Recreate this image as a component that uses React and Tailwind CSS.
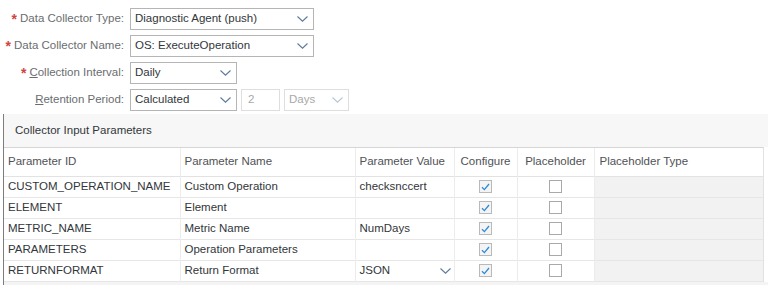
import React from 'react';

const Chevron = ({ className = 'text-[#5b7a9c]' }) => (
  <svg width="11" height="6" viewBox="0 0 11 6" className={className}>
    <polyline points="0.5,0.5 5.5,5.2 10.5,0.5" fill="none" stroke="currentColor" strokeWidth="1.1" />
  </svg>
);

const Select = ({ value, width, disabled }) => (
  <div
    className={`h-[22px] ${width} flex items-center justify-between pl-[4px] pr-[5px] bg-white border ${
      disabled ? 'border-[#dedede] text-[#a8a8a8]' : 'border-[#b5b5b5] text-[#32363a]'
    }`}
  >
    <span>{value}</span>
    <Chevron className={disabled ? 'text-[#b8c6d6]' : 'text-[#5b7a9c]'} />
  </div>
);

const FormRow = ({ required, label, children }) => (
  <div className="flex items-center h-[22px]">
    <div className="w-[124px] flex justify-end items-center text-[#6a6d70]">
      {required && <span className="text-[#d04343] text-[14px] font-bold mr-[3px] leading-none">*</span>}
      <span>{label}</span>
    </div>
    <div className="ml-[6px] flex items-center gap-[4px]">{children}</div>
  </div>
);

const CheckBox = ({ checked }) => (
  <div
    className={`w-[13px] h-[13px] mx-auto flex items-center justify-center border ${
      checked ? 'bg-[#f4f4f4] border-[#b9b9b9]' : 'bg-white border-[#a9a9a9]'
    }`}
  >
    {checked && (
      <svg width="9" height="8" viewBox="0 0 9 8">
        <polyline points="1,4.2 3.4,6.6 8,1" fill="none" stroke="#2a8ad8" strokeWidth="1.3" />
      </svg>
    )}
  </div>
);

const rows = [
  { id: 'CUSTOM_OPERATION_NAME', name: 'Custom Operation', value: 'checksnccert' },
  { id: 'ELEMENT', name: 'Element', value: '' },
  { id: 'METRIC_NAME', name: 'Metric Name', value: 'NumDays' },
  { id: 'PARAMETERS', name: 'Operation Parameters', value: '' },
  { id: 'RETURNFORMAT', name: 'Return Format', value: 'JSON', dropdown: true },
];

export default function App() {
  return (
    <div className="w-[768px] h-[285px] bg-white overflow-hidden text-[11.5px] font-['Liberation_Sans',Arial,sans-serif] text-[#32363a]">
      <div className="pt-[8px] flex flex-col gap-[5px]">
        <FormRow required label="Data Collector Type:">
          <Select value="Diagnostic Agent (push)" width="w-[184px]" />
        </FormRow>
        <FormRow required label="Data Collector Name:">
          <Select value="OS: ExecuteOperation" width="w-[184px]" />
        </FormRow>
        <FormRow
          required
          label={
            <>
              <span className="underline">C</span>ollection Interval:
            </>
          }
        >
          <Select value="Daily" width="w-[107px]" />
        </FormRow>
        <FormRow
          label={
            <>
              <span className="underline">R</span>etention Period:
            </>
          }
        >
          <Select value="Calculated" width="w-[107px]" />
          <div className="h-[22px] w-[39px] border border-[#dedede] text-[#a8a8a8] flex items-center pl-[6px]">2</div>
          <Select value="Days" width="w-[65px]" disabled />
        </FormRow>
      </div>

      <div className="mt-[3px] ml-[3px] border-l border-[#7d7d7d]">
        <div className="h-[33px] bg-[#f7f7f7] flex items-center pl-[11px] text-[#32363a]">
          Collector Input Parameters
        </div>
        <div className="w-[760px] border-t border-[#d6d6d6] border-r border-r-[#e2e2e2]">
          <table className="table-fixed border-collapse w-[759px]">
            <colgroup>
              <col className="w-[176px]" />
              <col className="w-[175px]" />
              <col className="w-[99px]" />
              <col className="w-[63px]" />
              <col className="w-[77px]" />
              <col className="w-[169px]" />
            </colgroup>
            <thead>
              <tr className="h-[28px] text-[#4f5256] border-b border-[#e2e2e2]">
                <th className="text-left font-normal pl-[4px] border-r border-[#ececec]">Parameter ID</th>
                <th className="text-left font-normal pl-[4px] border-r border-[#ececec]">Parameter Name</th>
                <th className="text-left font-normal pl-[4px] border-r border-[#ececec]">Parameter Value</th>
                <th className="text-center font-normal border-r border-[#ececec]">Configure</th>
                <th className="text-center font-normal border-r border-[#ececec]">Placeholder</th>
                <th className="text-left font-normal pl-[5px]">Placeholder Type</th>
              </tr>
            </thead>
            <tbody>
              {rows.map((r) => (
                <tr key={r.id} className="h-[21px] border-b border-[#e6e6e6]">
                  <td className="pl-[4px] border-r border-[#ececec]">{r.id}</td>
                  <td className="pl-[4px] border-r border-[#ececec]">{r.name}</td>
                  <td className="pl-[4px] pr-[3px] border-r border-[#ececec]">
                    {r.dropdown ? (
                      <div className="flex items-center justify-between">
                        <span>{r.value}</span>
                        <Chevron />
                      </div>
                    ) : (
                      r.value
                    )}
                  </td>
                  <td className="border-r border-[#ececec]">
                    <CheckBox checked />
                  </td>
                  <td className="border-r border-[#ececec]">
                    <CheckBox />
                  </td>
                  <td className="bg-[#f2f2f2]"></td>
                </tr>
              ))}
            </tbody>
          </table>
        </div>
        <div className="h-[6px] bg-[#f4f4f4]"></div>
      </div>
    </div>
  );
}
